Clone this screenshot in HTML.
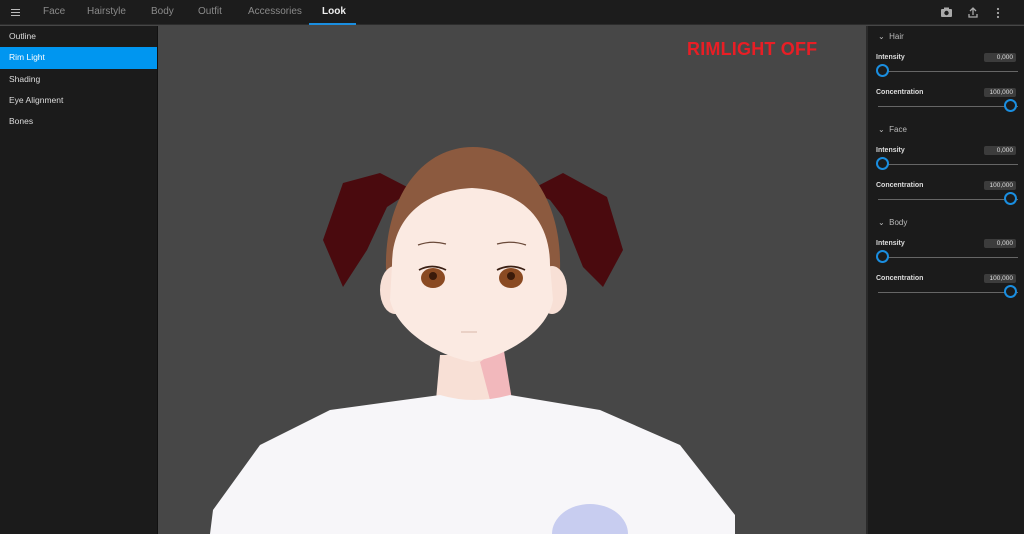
<!DOCTYPE html>
<html><head><style>
*{margin:0;padding:0;box-sizing:border-box}
html,body{width:1024px;height:534px;overflow:hidden}
body{background:#474747;font-family:"Liberation Sans",sans-serif;position:relative}
.top{position:absolute;left:0;top:0;width:1024px;height:25px;background:#1c1c1c;border-bottom:1px solid #2c2c2c}
.tab{position:absolute;top:6px;font-size:10px;color:#8a8a8a}
.left{position:absolute;left:0;top:26px;width:158px;height:508px;background:#1b1b1b;border-right:1px solid #111}
.li{height:21.3px;line-height:21px;padding-left:9px;font-size:8.5px;color:#ddd}
.li.sel{background:#0096f0;color:#fff}
.right{position:absolute;left:866px;top:26px;width:158px;height:508px;background:#1b1b1b;border-left:2px solid #2a2a2a}
.sec{position:absolute;left:10px;font-size:8px;color:#bbb}
.lab{position:absolute;left:8px;font-size:7px;color:#ddd;font-weight:bold}
.val{position:absolute;right:8px;width:32px;height:9px;background:#3c3c3c;border-radius:2px;font-size:6.5px;color:#ddd;text-align:right;padding-right:3px;line-height:9px}
.trk{position:absolute;left:10px;width:140px;height:1px;background:#666}
.knob{position:absolute;width:13px;height:13px;border-radius:50%;border:2px solid #1a8ee0;background:#1b1b1b}
.hb{position:absolute;left:11px;width:9px;height:1.3px;background:#bbb}
</style></head><body>
<div class="top">
<div class="hb" style="top:9px"></div><div class="hb" style="top:12px"></div><div class="hb" style="top:15px"></div>
<div class="tab" style="left:43px">Face</div>
<div class="tab" style="left:87px">Hairstyle</div>
<div class="tab" style="left:151px">Body</div>
<div class="tab" style="left:198px">Outfit</div>
<div class="tab" style="left:248px">Accessories</div>
<div class="tab" style="left:322px;color:#eee;font-weight:bold">Look</div>
<div style="position:absolute;left:309px;top:23px;width:47px;height:2px;background:#1a8ee0"></div>
<svg style="position:absolute;left:940px;top:7px" width="70" height="12">
<rect x="1" y="2" width="11" height="8" rx="1" fill="#aaa"/><circle cx="6.5" cy="6" r="2.2" fill="#1c1c1c"/><rect x="4" y="0.5" width="5" height="2" fill="#aaa"/>
<path d="M30 4 L33 1 L36 4 M33 1 V8 M29 7 V10 H37 V7" stroke="#aaa" stroke-width="1.3" fill="none"/>
<circle cx="58" cy="2" r="1.1" fill="#aaa"/><circle cx="58" cy="6" r="1.1" fill="#aaa"/><circle cx="58" cy="10" r="1.1" fill="#aaa"/>
</svg>
</div>
<div class="left">
<div class="li">Outline</div><div class="li sel">Rim Light</div><div class="li">Shading</div><div class="li">Eye Alignment</div><div class="li">Bones</div>
</div>
<div style="position:absolute;left:687px;top:39px;font-size:18px;font-weight:bold;color:#e81e25;letter-spacing:0.2px">RIMLIGHT OFF</div>
<svg style="position:absolute;left:0;top:0" width="1024" height="534">
<polygon points="323,240 343,183 380,173 413,190 387,207 367,250 343,287" fill="#4a0a0e"/>
<polygon points="530,190 563,173 607,197 623,250 603,287 583,267 563,217 550,200" fill="#4a0a0e"/>
<path d="M440,355 L503,355 L508,400 L436,400Z" fill="#f8e0d6"/>
<path d="M480,362 L503,345 L512,400 L490,400Z" fill="#f2b8bc"/>
<path d="M386,270 C384,200 420,147 473,147 C526,147 562,200 560,270Z" fill="#8c5a3f"/>
<ellipse cx="395" cy="290" rx="15" ry="24" fill="#f8e0d6"/>
<ellipse cx="552" cy="290" rx="15" ry="24" fill="#f8e0d6"/>
<path d="M392,265 C392,215 428,190 472,188 C517,190 550,215 550,265 L553,300 C548,330 510,355 472,362 C435,355 397,330 390,300Z" fill="#fbeae2"/>
<ellipse cx="433" cy="278" rx="12" ry="10" fill="#8a4a22"/><circle cx="433" cy="276" r="4" fill="#3a1a0a"/>
<ellipse cx="511" cy="278" rx="12" ry="10" fill="#8a4a22"/><circle cx="511" cy="276" r="4" fill="#3a1a0a"/>
<path d="M418,245 Q432,240 446,244 M497,244 Q512,240 526,245" stroke="#6a4a3a" stroke-width="1.2" fill="none"/>
<path d="M419,270 Q432,263 446,270 M497,270 Q511,263 525,270" stroke="#3a2015" stroke-width="1.8" fill="none"/>
<path d="M461,332 H477" stroke="#d9b8aa" stroke-width="1"/>
<path d="M330,410 L440,395 Q474,405 510,395 L600,410 L680,445 L735,515 L735,534 L210,534 L213,510 L260,445Z" fill="#f7f6f9"/>
<ellipse cx="590" cy="534" rx="38" ry="30" fill="#c8cdf0"/>
</svg>
<div class="right">
<div class="sec" style="top:6px">⌄&nbsp; Hair</div>
<div class="lab" style="top:28px">Intensity</div><div class="val" style="top:27px">0,000</div>
<div class="trk" style="top:45px"></div><div class="knob" style="left:8px;top:38px"></div>
<div class="lab" style="top:63px">Concentration</div><div class="val" style="top:62px">100,000</div>
<div class="trk" style="top:80px"></div><div class="knob" style="left:136px;top:73px"></div>
<div class="sec" style="top:99px">⌄&nbsp; Face</div>
<div class="lab" style="top:121px">Intensity</div><div class="val" style="top:120px">0,000</div>
<div class="trk" style="top:138px"></div><div class="knob" style="left:8px;top:131px"></div>
<div class="lab" style="top:156px">Concentration</div><div class="val" style="top:155px">100,000</div>
<div class="trk" style="top:173px"></div><div class="knob" style="left:136px;top:166px"></div>
<div class="sec" style="top:192px">⌄&nbsp; Body</div>
<div class="lab" style="top:214px">Intensity</div><div class="val" style="top:213px">0,000</div>
<div class="trk" style="top:231px"></div><div class="knob" style="left:8px;top:224px"></div>
<div class="lab" style="top:249px">Concentration</div><div class="val" style="top:248px">100,000</div>
<div class="trk" style="top:266px"></div><div class="knob" style="left:136px;top:259px"></div>
</div>
</body></html>
